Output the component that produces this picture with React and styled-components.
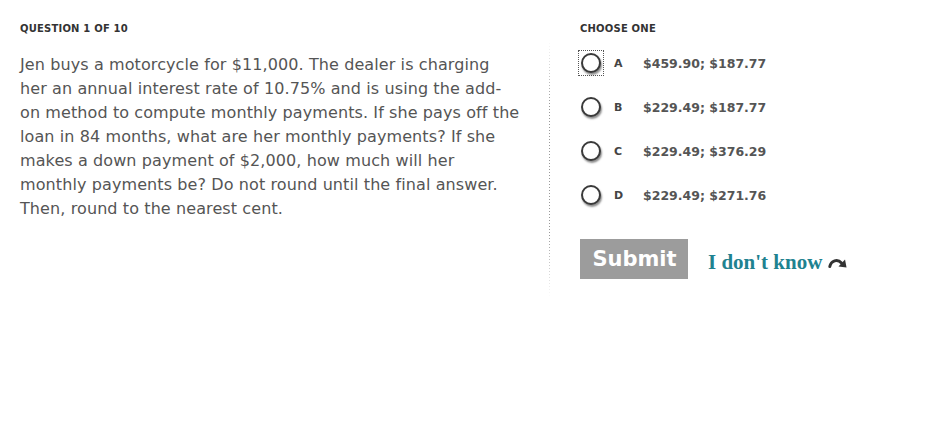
import React from "react";
import styled, { createGlobalStyle } from "styled-components";

const GlobalStyle = createGlobalStyle`
  html, body {
    margin: 0;
    padding: 0;
    background: #fff;
  }
  body {
    font-family: "DejaVu Sans", Verdana, sans-serif;
  }
`;

// Only the bottom edge of the header bar peeks into the frame
const TopBar = styled.div`
  height: 3px;
  overflow: hidden;
  display: flex;
  justify-content: flex-end;
  align-items: flex-end;
  padding-right: 17px;
`;

const TopLink = styled.span`
  font-size: 11px;
  line-height: 12px;
  font-weight: bold;
  color: #222;
  letter-spacing: 0.3px;
`;

const Main = styled.div`
  display: flex;
  align-items: flex-start;
`;

const QuestionCol = styled.section`
  width: 509px;
  padding: 19px 20px 0;
  flex-shrink: 0;
`;

const Label = styled.h2`
  margin: 0;
  font-size: 10px;
  line-height: 14px;
  font-weight: bold;
  color: #333;
  letter-spacing: 0.2px;
`;

const QuestionText = styled.p`
  margin: 17px 0 0;
  font-size: 16px;
  line-height: 24px;
  letter-spacing: 0.1px;
  color: #555;
  white-space: nowrap;
`;

const Divider = styled.div`
  width: 1px;
  height: 258px;
  margin-top: 37px;
  flex-shrink: 0;
  background-image: linear-gradient(#999 50%, transparent 50%);
  background-size: 1px 3px;
  -webkit-mask-image: linear-gradient(transparent, #000 25%, #000 75%, transparent);
  mask-image: linear-gradient(transparent, #000 25%, #000 75%, transparent);
`;

const AnswerCol = styled.section`
  padding: 19px 0 0 30px;
`;

const Options = styled.ul`
  list-style: none;
  margin: 5px 0 0;
  padding: 0;
`;

const Option = styled.li`
  display: flex;
  align-items: center;
  height: 44px;
`;

const RadioFrame = styled.span`
  box-sizing: border-box;
  width: 26px;
  height: 26px;
  margin-left: -2px;
  display: flex;
  align-items: center;
  justify-content: center;
  border: 1px dotted ${(p) => (p.$focused ? "#555" : "transparent")};
  flex-shrink: 0;
`;

const Radio = styled.span`
  box-sizing: border-box;
  width: 20px;
  height: 20px;
  border-radius: 50%;
  border: 2.5px solid #3a3a3a;
  background: #fff;
  box-shadow: 1px 2px 2px rgba(0, 0, 0, 0.45);
`;

const Letter = styled.span`
  width: 29px;
  margin-left: 10px;
  font-size: 11px;
  font-weight: bold;
  color: #444;
`;

const Value = styled.span`
  font-size: 12.5px;
  font-weight: bold;
  color: #555;
`;

const Actions = styled.div`
  display: flex;
  align-items: center;
  margin-top: 22px;
  gap: 20px;
`;

const Submit = styled.button`
  width: 108px;
  height: 40px;
  border: none;
  background: #9c9c9c;
  color: #fff;
  font-family: "DejaVu Sans", Verdana, sans-serif;
  font-size: 21px;
  font-weight: bold;
  padding: 0 0 0 1px;
`;

const Skip = styled.a`
  display: flex;
  align-items: center;
  gap: 6px;
  margin-top: 6px;
  font-family: "Liberation Serif", Georgia, serif;
  font-size: 21px;
  font-weight: bold;
  color: #1f8290;
  text-decoration: none;
`;

const SkipArrow = () => (
  <svg width="19" height="13" viewBox="0 0 19 13" aria-hidden="true">
    <path
      d="M1.8 10.5 C3 4.5 9.5 2.5 13.5 7"
      fill="none"
      stroke="#333"
      strokeWidth="3"
      strokeLinecap="round"
    />
    <path d="M10.5 10.5 L18.5 11.5 L17 3.5 Z" fill="#333" />
  </svg>
);

const answers = [
  { letter: "A", value: "$459.90; $187.77" },
  { letter: "B", value: "$229.49; $187.77" },
  { letter: "C", value: "$229.49; $376.29" },
  { letter: "D", value: "$229.49; $271.76" },
];

const questionLines = [
  "Jen buys a motorcycle for $11,000. The dealer is charging",
  "her an annual interest rate of 10.75% and is using the add-",
  "on method to compute monthly payments. If she pays off the",
  "loan in 84 months, what are her monthly payments? If she",
  "makes a down payment of $2,000, how much will her",
  "monthly payments be? Do not round until the final answer.",
  "Then, round to the nearest cent.",
];

export default function App() {
  return (
    <>
      <GlobalStyle />
      <TopBar>
        <TopLink>TEST INSTRUCTIONS &#9662;</TopLink>
      </TopBar>
      <Main>
        <QuestionCol>
          <Label>QUESTION 1 OF 10</Label>
          <QuestionText>
            {questionLines.map((line, i) => (
              <React.Fragment key={i}>
                {line}
                {i < questionLines.length - 1 && <br />}
              </React.Fragment>
            ))}
          </QuestionText>
        </QuestionCol>
        <Divider />
        <AnswerCol>
          <Label>CHOOSE ONE</Label>
          <Options>
            {answers.map((a, i) => (
              <Option key={a.letter}>
                <RadioFrame $focused={i === 0}>
                  <Radio />
                </RadioFrame>
                <Letter>{a.letter}</Letter>
                <Value>{a.value}</Value>
              </Option>
            ))}
          </Options>
          <Actions>
            <Submit>Submit</Submit>
            <Skip href="#">
              I don't know <SkipArrow />
            </Skip>
          </Actions>
        </AnswerCol>
      </Main>
    </>
  );
}
